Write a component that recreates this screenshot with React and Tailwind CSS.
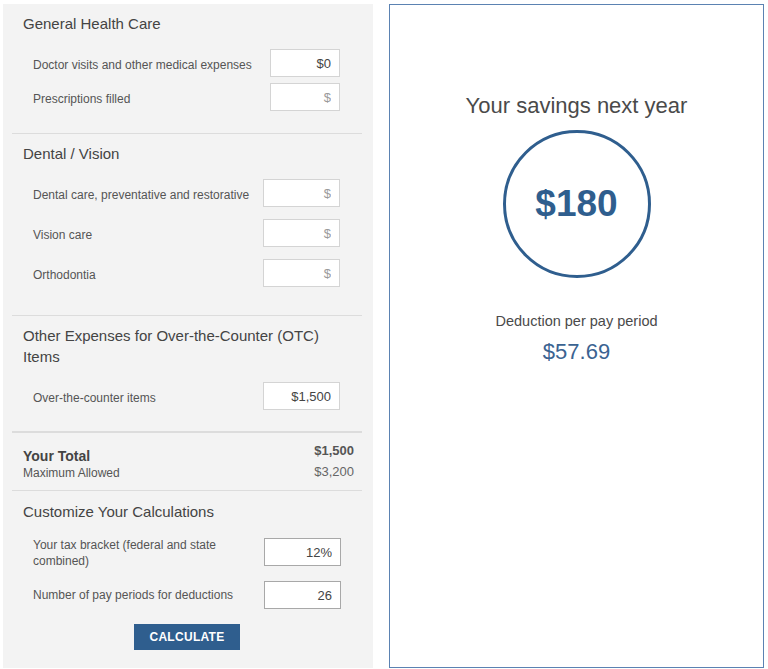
import React from "react";

const font = { fontFamily: '"Liberation Sans", Arial, sans-serif' };

function MoneyRow({ label, value, wide }) {
  return (
    <div className="flex items-center justify-between pl-[21px] pr-[22px]">
      <span className="pt-[3px] text-[12px] leading-[16px] text-[#555]">{label}</span>
      <input
        readOnly
        value={value || ""}
        placeholder="$"
        className={`${wide ? "w-[77px]" : "w-[70px]"} h-[28px] bg-white border border-[#d4d4d4] pr-[8px] text-right text-[13px] text-[#444] placeholder:text-[#9a9a9a] outline-none`}
      />
    </div>
  );
}

function Section({ title, children, gap, bottom, border }) {
  return (
    <div className={`pt-[9px] ${bottom} ${border}`}>
      <h3 className="pl-[11px] pr-[40px] text-[15px] leading-[21px] font-normal text-[#444]">{title}</h3>
      <div className={`mt-[15px] flex flex-col ${gap}`}>{children}</div>
    </div>
  );
}

export default function App() {
  return (
    <div className="flex bg-white w-[768px] h-[669px]" style={font}>
      {/* Calculator form */}
      <div className="ml-[3px] mt-[4px] w-[370px] h-[664px] bg-[#f3f3f3] pl-[9px] pr-[11px]">
        <Section title="General Health Care" gap="gap-[6px]" bottom="pb-[22px]" border="border-b border-[#dcdcdc]">
          <MoneyRow label="Doctor visits and other medical expenses" value="$0" />
          <MoneyRow label="Prescriptions filled" />
        </Section>

        <Section title="Dental / Vision" gap="gap-[12px]" bottom="pb-[28px]" border="border-b border-[#dcdcdc]">
          <MoneyRow label="Dental care, preventative and restorative" wide />
          <MoneyRow label="Vision care" wide />
          <MoneyRow label="Orthodontia" wide />
        </Section>

        <Section
          title="Other Expenses for Over-the-Counter (OTC) Items"
          gap="gap-[12px]"
          bottom="pb-[21px]"
          border="border-b-2 border-[#dcdcdc]"
        >
          <MoneyRow label="Over-the-counter items" value="$1,500" wide />
        </Section>

        {/* Totals */}
        <div className="h-[58px] flex items-start justify-between border-b border-[#dcdcdc] pl-[11px] pr-[8px]">
          <div className="pt-[14px]">
            <div className="text-[14px] leading-[18px] font-bold text-[#444]">Your Total</div>
            <div className="text-[12px] leading-[16px] text-[#555]">Maximum Allowed</div>
          </div>
          <div className="pt-[9px] text-right text-[13px]">
            <div className="leading-[18px] font-bold text-[#555]">$1,500</div>
            <div className="mt-[3px] leading-[18px] text-[#666]">$3,200</div>
          </div>
        </div>

        {/* Customize */}
        <div className="pt-[11px]">
          <h3 className="pl-[11px] text-[15px] leading-[20px] font-normal text-[#444]">Customize Your Calculations</h3>
          <div className="mt-[15px] flex flex-col gap-[12px]">
            <div className="flex items-start justify-between pl-[21px] pr-[21px]">
              <span className="max-w-[200px] text-[12px] leading-[16px] text-[#555]">
                Your tax bracket (federal and state combined)
              </span>
              <input
                readOnly
                value="12%"
                className="mt-[1px] w-[77px] h-[28px] bg-white border border-[#a8a8a8] pr-[8px] text-right text-[13px] text-[#444] outline-none"
              />
            </div>
            <div className="flex items-center justify-between pl-[21px] pr-[21px]">
              <span className="text-[12px] leading-[16px] text-[#555]">Number of pay periods for deductions</span>
              <input
                readOnly
                value="26"
                className="w-[77px] h-[28px] bg-white border border-[#a8a8a8] pr-[8px] text-right text-[13px] text-[#444] outline-none"
              />
            </div>
          </div>
          <div className="mt-[15px] flex justify-center">
            <button className="w-[106px] h-[26px] bg-[#2f5e8e] text-white text-[12px] font-bold tracking-[0.3px]">
              CALCULATE
            </button>
          </div>
        </div>
      </div>

      {/* Results card */}
      <div className="ml-[16px] mt-[4px] w-[375px] h-[664px] border border-[#5b82b2] flex flex-col items-center pt-[88px]">
        <h2 className="text-[22px] leading-[26px] font-normal text-[#4a4a4a]">Your savings next year</h2>
        <div className="mt-[11px] w-[148px] h-[148px] rounded-full border-[3px] border-[#2f5e8e] flex items-center justify-center">
          <span className="text-[37px] font-bold text-[#2f5e8e]">$180</span>
        </div>
        <div className="mt-[34px] text-[14.5px] leading-[18px] text-[#4a4a4a]">Deduction per pay period</div>
        <div className="mt-[10px] text-[22px] leading-[24px] text-[#3b6391]">$57.69</div>
      </div>
    </div>
  );
}
